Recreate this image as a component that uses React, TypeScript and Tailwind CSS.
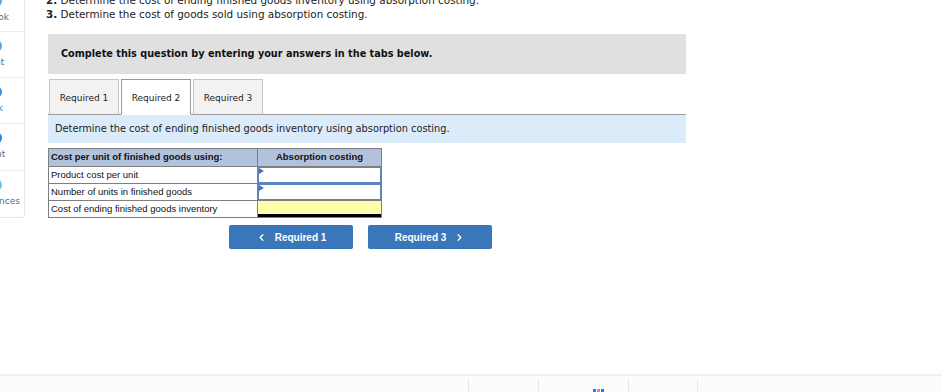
import { ChevronLeft, ChevronRight } from "lucide-react";

const sideItems = [
  { h: "h-[32px]", pt: "pt-0 mt-[-5px]", label: "eBook", icon: "bg-[#5aa9e6]" },
  { h: "h-[46px]", pt: "pt-[8px]", label: "Hint", icon: "bg-[#6a9ee0]" },
  { h: "h-[46px]", pt: "pt-[8px]", label: "Ask", icon: "bg-[#3d8fe0]" },
  { h: "h-[47px]", pt: "pt-[8px]", label: "Print", icon: "bg-[#2b7fd4]" },
  { h: "h-[46px]", pt: "pt-[8px]", label: "References", icon: "bg-[#6cc0f0]" },
];

function Sidebar() {
  return (
    <div className="w-[25px] shrink-0 h-[218px] border-r border-b border-[#e6e6e6] rounded-br-[4px] overflow-hidden flex flex-col">
      {sideItems.map((it, i) => (
        <div key={i} className={`${it.h} shrink-0 border-b border-[#ececec] last:border-b-0 overflow-hidden`}>
          <div className={`ml-[-35px] w-[60px] flex flex-col items-center ${it.pt}`}>
            <span className={`w-[14px] h-[12px] rounded-full ${it.icon}`} />
            <span className="mt-[5px] text-[9px] leading-[10px] text-[#4d6e91] whitespace-nowrap">{it.label}</span>
          </div>
        </div>
      ))}
    </div>
  );
}

function Tabs() {
  const tabs = ["Required 1", "Required 2", "Required 3"];
  return (
    <div className="mt-[5px] ml-[2px] w-[638px] flex items-end gap-[2px] border-b border-[#9a9a9a] pl-[1px]">
      {tabs.map((t, i) => (
        <div
          key={t}
          className={`w-[70px] h-[36px] flex items-center justify-center pt-[4px] text-[9px] text-[#222] -mb-px ${
            i === 1
              ? "bg-white border border-[#9a9a9a] border-b-white"
              : "bg-[#f2f2f2] border border-[#c4c4c4] border-b-[#9a9a9a]"
          }`}
        >
          {t}
        </div>
      ))}
    </div>
  );
}

function InputCell() {
  return (
    <div className="h-full relative border border-[#5d86bd] bg-white">
      <span className="absolute left-0 top-0 w-0 h-0 border-t-[3px] border-b-[3px] border-l-[5px] border-t-transparent border-b-transparent border-l-[#3b78c4]" />
    </div>
  );
}

function CostTable() {
  const rows = ["Product cost per unit", "Number of units in finished goods", "Cost of ending finished goods inventory"];
  return (
    <div className="mt-[5px] ml-[2px] w-[334px] border border-[#7f7f7f] font-['Liberation_Sans',Arial,sans-serif] text-[9.5px] text-[#111]">
      <div className="flex h-[17px] bg-[#b2c2dc] font-bold">
        <div className="w-[209px] border-r border-[#7f7f7f] pl-[2px] flex items-center">
          Cost per unit of finished goods using:
        </div>
        <div className="flex-1 flex items-center justify-center">Absorption costing</div>
      </div>
      {rows.map((r, i) => (
        <div key={r} className="flex h-[17px] border-t border-[#7f7f7f] bg-white">
          <div className="w-[209px] border-r border-[#7f7f7f] pl-[2px] flex items-center">{r}</div>
          <div className="flex-1">
            {i < 2 ? (
              <InputCell />
            ) : (
              <div className="h-full bg-[#ffffaa] border-b-[3px] border-black" />
            )}
          </div>
        </div>
      ))}
    </div>
  );
}

export default function App() {
  return (
    <div className="w-[942px] h-[392px] bg-white overflow-hidden flex flex-col font-['DejaVu_Sans',Verdana,sans-serif] text-[#222]">
      <div className="flex flex-1">
        <Sidebar />
        <div className="pl-[21px] flex flex-col">
          <p className="mt-[-7px] text-[10.4px] leading-[14px] text-[#222] whitespace-nowrap">
            <b>2.</b> Determine the cost of ending finished goods inventory using absorption costing.
          </p>
          <p className="text-[10.4px] leading-[14px] whitespace-nowrap">
            <b>3.</b> Determine the cost of goods sold using absorption costing.
          </p>
          <div className="mt-[13px] ml-[2px] w-[638px] h-[40px] bg-[#e0e0e0] flex items-center pl-[13px]">
            <span className="text-[9.7px] font-bold text-[#111]">
              Complete this question by entering your answers in the tabs below.
            </span>
          </div>
          <Tabs />
          <div className="ml-[2px] w-[638px] h-[28px] bg-[#dbebf9] flex items-center pl-[7px] text-[9.8px] text-[#222]">
            Determine the cost of ending finished goods inventory using absorption costing.
          </div>
          <CostTable />
          <div className="mt-[7px] ml-[183px] flex gap-[15px] font-['Liberation_Sans',Arial,sans-serif]">
            <button className="w-[124px] h-[24px] bg-[#3a76ba] rounded-[2px] text-white text-[10px] font-bold flex items-center justify-center gap-[8px]">
              <ChevronLeft className="w-[11px] h-[11px]" strokeWidth={3} />
              Required 1
            </button>
            <button className="w-[124px] h-[24px] bg-[#3a76ba] rounded-[2px] text-white text-[10px] font-bold flex items-center justify-center gap-[8px]">
              Required 3
              <ChevronRight className="w-[11px] h-[11px]" strokeWidth={3} />
            </button>
          </div>
        </div>
      </div>
      <div className="h-[18px] shrink-0 border-t-2 border-[#f0f0f0] bg-[#fcfcfc] flex">
        <div className="w-[468px] shrink-0" />
        <div className="w-[70px] shrink-0 border-l border-[#e8e8e8] mt-[3px]" />
        <div className="w-[90px] shrink-0 border-l border-[#e8e8e8] mt-[3px] flex justify-center items-end">
          <div className="flex gap-[1px] ml-[30px]">
            <span className="w-[3px] h-[3px] bg-[#3d7ac8]" />
            <span className="w-[3px] h-[3px] bg-[#c48ab8]" />
            <span className="w-[3px] h-[3px] bg-[#3d7ac8]" />
          </div>
        </div>
        <div className="w-[69px] shrink-0 border-l border-[#e8e8e8] mt-[3px]" />
        <div className="flex-1 border-l border-[#e8e8e8] mt-[3px]" />
      </div>
    </div>
  );
}
